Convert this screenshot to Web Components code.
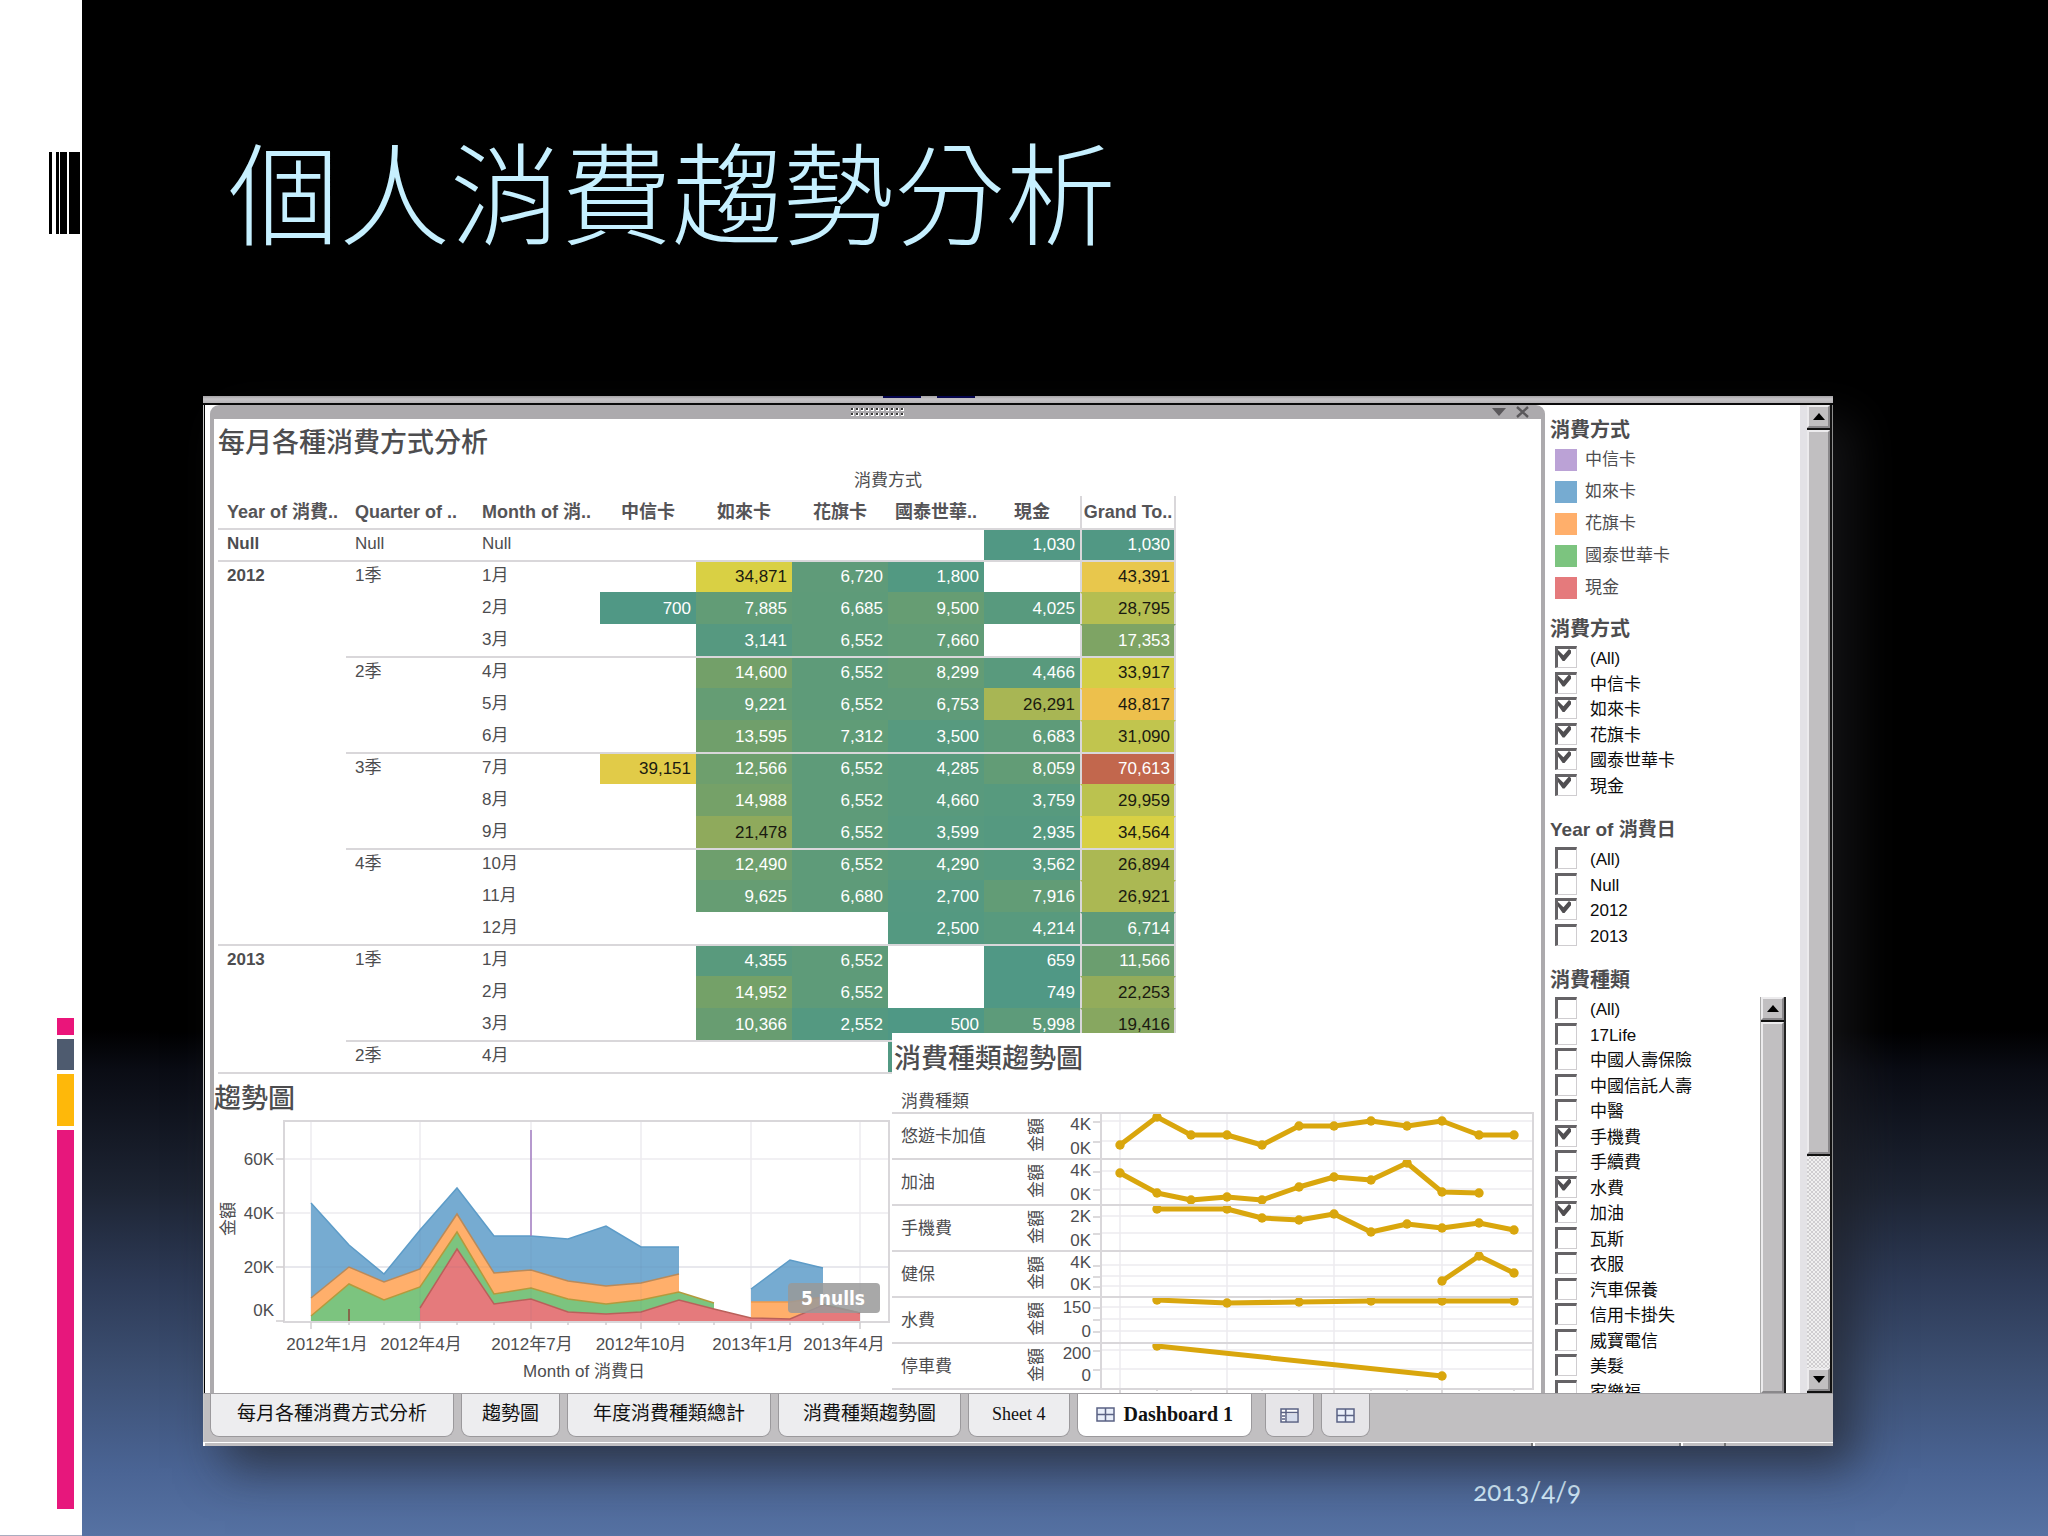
<!DOCTYPE html>
<html lang="zh-Hant">
<head>
<meta charset="utf-8">
<title>個人消費趨勢分析</title>
<style>
  html, body { margin: 0; }
  body { font: 17px/28px "Liberation Sans", "Noto Sans CJK TC", sans-serif; color: #4d4d4f; }
</style>
</head>
<body>
<slide-page>
  <accent-rail slot="rail"></accent-rail>
  <span slot="title">個人消費趨勢分析</span>
  <viz-window>
    <viz-sheet slot="sheet">
      <cross-tab heading="每月各種消費方式分析"></cross-tab>
      <area-trend heading="趨勢圖"></area-trend>
      <category-trends slot="overlay" heading="消費種類趨勢圖"></category-trends>
    </viz-sheet>
    <filter-pane slot="filters"></filter-pane>
    <sheet-tabs slot="tabs">
      <sheet-tab style="--pad:26px">每月各種消費方式分析</sheet-tab>
      <sheet-tab style="--pad:20px">趨勢圖</sheet-tab>
      <sheet-tab style="--pad:25px">年度消費種類總計</sheet-tab>
      <sheet-tab style="--pad:24px">消費種類趨勢圖</sheet-tab>
      <sheet-tab style="--pad:23px" serif>Sheet 4</sheet-tab>
      <sheet-tab style="--pad:18px" active icon="grid">Dashboard 1</sheet-tab>
      <sheet-tab style="--pad:14px" tool icon="sheet" label="新工作表"></sheet-tab>
      <sheet-tab style="--pad:14px" tool icon="grid" label="新儀表板"></sheet-tab>
    </sheet-tabs>
  </viz-window>
  <time slot="date" datetime="2013-04-09">2013/4/9</time>
</slide-page>

<script>
const shadow = (el, html) => { const r = el.attachShadow({ mode: 'open' }); r.innerHTML = html; return r; };
const SANS = '"Liberation Sans", "Noto Sans CJK TC", sans-serif';

customElements.define('slide-page', class extends HTMLElement {
  constructor() {
    super();
    shadow(this, `<style>
      :host { display: grid; grid-template-columns: 82px 1fr; min-height: 100vh; background: #fff; }
      main { display: flex; flex-direction: column; padding: 0 215px 0 121px;
        background: linear-gradient(#000 0, #000 1030px, #0a0c14 1070px, #1d2433 1190px, #2d3a56 1280px, #3c4f72 1370px, #4a6494 1470px, #5672a3 1536px); }
      h1 { margin: 114px 0 0 25px; height: 282px; font: 300 111px/150px "Noto Sans CJK TC", sans-serif; color: #c6f0ff; }
      footer { margin: 28px 0 0; padding-right: 252px; display: flex; justify-content: flex-end;
        font: 26px/34px Lato, "Open Sans", sans-serif; font-variant-numeric: oldstyle-nums; color: #d6eefe; }
    </style>
    <slot name="rail"></slot>
    <main><h1><slot name="title"></slot></h1><slot></slot><footer><slot name="date"></slot></footer></main>`);
  }
});

customElements.define('accent-rail', class extends HTMLElement {
  constructor() {
    super();
    shadow(this, `<style>
      :host { display: flex; flex-direction: column; background: #fff; border-bottom: 1px solid #a9acc0; box-sizing: border-box; }
      .code { display: flex; height: 82px; margin: 152px 0 784px 49px; }
      .code i { background: #000; }
      .bar { width: 17px; margin: 0 0 4px 57px; }
    </style>
    <div class="code"><i style="width:3px;margin-right:4px"></i><i style="width:3px;margin-right:1px"></i><i style="width:7px;margin-right:2px"></i><i style="width:11px"></i></div>
    <div class="bar" style="height:17px;background:#ea157a"></div>
    <div class="bar" style="height:31px;background:#4e5b6f"></div>
    <div class="bar" style="height:52px;background:#feb80a"></div>
    <div class="bar" style="height:379px;background:#e7177c"></div>`);
  }
});

customElements.define('viz-window', class extends HTMLElement {
  constructor() {
    super();
    shadow(this, `<style>
      :host { display: block; position: relative; background: #fff; box-shadow: 22px 22px 44px rgba(30,30,34,.62); }
      .edge { height: 7px; background: linear-gradient(#a5a3a6, #c6c4c7 3px, #b5b3b6); border-bottom: 2px solid #0a0a0a; padding-left: 680px; display: flex; gap: 16px; }
      .edge i { width: 38px; height: 2px; background: #06064e; }
      .body { display: flex; height: 988px; border-left: 1px solid #c9c9c9; border-right: 1px solid #8d8d8d; }
      .frame { flex: 1; display: flex; min-width: 0; border-left: 1px solid #000; border-right: 2px solid #111; padding-left: 5px; }
      .status { display: flex; height: 4px; background: #c1bfc1; border-top: 1px solid #fff; box-sizing: border-box; }
      .status i { height: 3px; border-right: 2px solid #777; border-left: 2px solid #fff; box-sizing: border-box; }
    </style>
    <div class="edge"><i></i><i></i></div>
    <div class="body"><div class="frame"><slot name="sheet"></slot><slot name="filters"></slot></div></div>
    <slot name="tabs"></slot>
    <div class="status"><i style="width:1330px"></i><i style="width:148px"></i><i style="width:45px"></i></div>`);
  }
});

customElements.define('viz-sheet', class extends HTMLElement {
  constructor() {
    super();
    let dots = '';
    for (let i = 0; i < 11; i++) for (let j = 0; j < 2; j++)
      dots += `<rect x="${i * 5}" y="${j * 5}" width="3" height="3" fill="#fff"/><rect x="${i * 5}" y="${j * 5}" width="2" height="2" fill="#3a3a3a"/>`;
    shadow(this, `<style>
      :host { flex: 1; min-width: 0; display: flex; flex-direction: column; }
      header { height: 14px; display: grid; grid-template-columns: 1fr auto 1fr; align-items: center; background: #acaaad; border-radius: 9px 9px 0 0; }
      header .tools { display: flex; justify-content: flex-end; gap: 10px; padding-right: 16px; }
      svg { display: block; }
      button { all: unset; display: block; }
      .content { flex: 1; position: relative; border: solid #acaaad; border-width: 0 4px; overflow: hidden; }
      ::slotted([slot=overlay]) { position: absolute; left: 678px; right: 0; top: 614px; bottom: 0; }
    </style>
    <header><span></span>
      <svg width="53" height="8">${dots}</svg>
      <div class="tools">
        <button aria-label="選單"><svg width="14" height="12"><path d="M0 2h14L7 10z" fill="#5a585b"/></svg></button>
        <button aria-label="關閉"><svg width="13" height="12"><path d="M1 1l11 10M12 1L1 11" stroke="#5a585b" stroke-width="2.4"/></svg></button>
      </div>
    </header>
    <div class="content"><slot></slot><slot name="overlay"></slot></div>`);
  }
});

/* Colour ramp of the highlight table: [amount, r, g, b] */
const RAMP = [[0,78,152,134],[6500,94,155,121],[14600,115,160,105],[21500,143,170,92],[26500,169,183,84],[31000,192,197,78],[34700,217,208,68],[39000,225,203,72],[43400,232,199,76],[48800,237,192,76],[70613,194,103,77]];
const ramp = v => {
  const k = Math.max(1, RAMP.findIndex(s => s[0] >= v));
  const a = RAMP[k - 1], b = RAMP[k], t = (v - a[0]) / (b[0] - a[0]);
  return `rgb(${[1, 2, 3].map(i => Math.round(a[i] + (b[i] - a[i]) * t)).join()})`;
};
const ROWS = [
  ['Null', 'Null', 'Null', [0,0,0,0,1030,1030]],
  ['2012', '1季', '1月', [0,34871,6720,1800,0,43391]],
  ['', '', '2月', [700,7885,6685,9500,4025,28795]],
  ['', '', '3月', [0,3141,6552,7660,0,17353]],
  ['', '2季', '4月', [0,14600,6552,8299,4466,33917]],
  ['', '', '5月', [0,9221,6552,6753,26291,48817]],
  ['', '', '6月', [0,13595,7312,3500,6683,31090]],
  ['', '3季', '7月', [39151,12566,6552,4285,8059,70613]],
  ['', '', '8月', [0,14988,6552,4660,3759,29959]],
  ['', '', '9月', [0,21478,6552,3599,2935,34564]],
  ['', '4季', '10月', [0,12490,6552,4290,3562,26894]],
  ['', '', '11月', [0,9625,6680,2700,7916,26921]],
  ['', '', '12月', [0,0,0,2500,4214,6714]],
  ['2013', '1季', '1月', [0,4355,6552,0,659,11566]],
  ['', '', '2月', [0,14952,6552,0,749,22253]],
  ['', '', '3月', [0,10366,2552,500,5998,19416]],
  ['', '2季', '4月', [0,0,0,'',0,0]]
];
customElements.define('cross-tab', class extends HTMLElement {
  constructor() {
    super();
    const span = (i, c) => { let n = 1; while (ROWS[i + n] && ROWS[i + n][c] === '' && !(c === 1 && ROWS[i + n][0])) n++; return n; };
    const body = ROWS.map((r, i) => {
      const y = r[0] ? `<th class="y" rowspan="${span(i, 0)}">${r[0]}</th>` : '';
      const q = r[1] ? `<th rowspan="${span(i, 1)}">${r[1]}</th>` : '';
      const cells = r[3].map((v, k) => v === '' ? `<td style="background-color:${ramp(1500)}"></td>` :
        v ? `<td style="background-color:${ramp(v)};color:${v > 18000 && v < 60000 ? '#1a1a10' : '#fff'}">${v.toLocaleString('en-US')}</td>` : '<td></td>').join('');
      return `<tr${r[1] ? ' class="g"' : ''}>${y}${q}<th>${r[2]}</th>${cells}</tr>`;
    }).join('');
    shadow(this, `<style>
      :host { display: block; padding-left: 4px; }
      h2 { margin: 0; height: 46px; font: 500 27px/48px ${SANS}; }
      table { border-collapse: separate; border-spacing: 0; table-layout: fixed; width: 958px; border-bottom: 2px solid #d9d7da; margin-bottom: -2px; }
      th, td { box-sizing: border-box; height: 32px; padding: 0; line-height: 28px; white-space: nowrap; }
      tbody th, tbody td { border-top: 2px solid transparent; }
      tbody th { text-align: left; font-weight: 400; vertical-align: top; padding-left: 9px; }
      tbody th.y { font-weight: 700; }
      td { text-align: right; padding-right: 5px; }
      tbody .g > * { border-top-color: #d9d7da; }
      .over th { height: 31px; font-weight: 400; text-align: center; }
      .heads th { font-size: 18px; text-align: center; overflow: hidden; color: #555457; }
      .heads th.l { text-align: left; padding-left: 9px; }
      td:last-child, .heads th:last-child { border-left: 2px solid #d9d7da; border-right: 2px solid #d9d7da; padding-right: 4px; }
      .heads th:last-child { padding: 0; }
    </style>
    <h2>${this.getAttribute('heading') || ''}</h2>
    <table>
      <colgroup><col style="width:128px"><col style="width:127px"><col style="width:127px"><col span="6" style="width:96px"></colgroup>
      <thead>
        <tr class="over"><th colspan="3"></th><th colspan="6">消費方式</th></tr>
        <tr class="heads"><th class="l">Year of 消費..</th><th class="l">Quarter of ..</th><th class="l">Month of 消..</th><th>中信卡</th><th>如來卡</th><th>花旗卡</th><th>國泰世華..</th><th>現金</th><th>Grand To..</th></tr>
      </thead>
      <tbody>${body}</tbody>
    </table>`);
  }
});

customElements.define('area-trend', class extends HTMLElement {
  constructor() {
    super();
    const X = [311,349,384,420,457,494,531,568,606,641,679,714,751,790,823,860];
    const B = 1321;
    const pts = (ys, s) => ys.map((y, i) => `${X[s + i]},${y}`);
    const area = (top, base, s, fill, edge) =>
      `<polygon points="${pts(top, s).concat(pts(base, s).reverse()).join(' ')}" fill="${fill}"/><polyline points="${pts(top, s).join(' ')}" fill="none" stroke="${edge}" stroke-width="1.5"/>`;
    const flat = n => Array(n).fill(B);
    const blue = [1203,1245,1274,1230,1188,1236,1236,1239,1226,1247,1247];
    const orange = [1298,1267,1282,1269,1214,1273,1270,1281,1286,1283,1274];
    const green = [1316,1284,1300,1287,1232,1294,1288,1299,1304,1300,1292,1303];
    const red = [1308,1249,1304,1299,1312,1314,1312,1300,1309,1318,1319,1305,1313];
    const yt = [['60K',1159,1159],['40K',1213,1213],['20K',1267,1267],['0K',1321,1310]];
    const xt = [['2012年1月',311,327],['2012年4月',420,421],['2012年7月',531,532],['2012年10月',641,641],['2013年1月',751,753],['2013年4月',860,844]];
    shadow(this, `<style>
      :host { display: block; width: 678px; }
      h2 { margin: 0; height: 48px; box-sizing: border-box; padding-top: 6px; font: 500 27px/42px ${SANS}; }
      svg { display: block; width: 100%; }
      text { font: 17px ${SANS}; fill: #4d4d4f; }
      .tip { font: 700 19px "DejaVu Sans Condensed", "DejaVu Sans", sans-serif; fill: #fff; }
    </style>
    <h2>${this.getAttribute('heading') || ''}</h2>
    <svg viewBox="214 1120 678 273">
      <rect x="284" y="1121" width="605" height="201" fill="none" stroke="#d9d7da" stroke-width="2"/>
      <g stroke="#ecebef" stroke-width="1.5">${yt.slice(0, 3).map(t => `<path d="M285 ${t[1]}H888"/>`).join('')}${xt.map(t => `<path d="M${t[1]} 1122V1321"/>`).join('')}</g>
      <g stroke="#d0ced1" stroke-width="1.5">${yt.map(t => `<path d="M276 ${t[1]}H284"/>`).join('')}${X.map((x, i) => `<path d="M${x} 1322v${i % 3 ? 3 : 7}"/>`).join('')}</g>
      ${area(blue, orange, 0, '#76abd1', '#5d9cc8')}
      ${area([1289,1260,1268], [1302,1302,1297], 12, '#76abd1', '#5d9cc8')}
      ${area(orange, green.slice(0, 11), 0, '#ffaf6b', '#b98a5a')}
      ${area([1302,1302,1297], [1318,1319,1304], 12, '#ffaf6b', '#f29a4a')}
      ${area(green, flat(4).concat(red.slice(1, 9)), 0, '#7cc47f', '#b39a3c')}
      ${area([1304,1313], [1305,1315], 14, '#7cc47f', '#5fae63')}
      ${area(red, flat(13), 3, '#e57a7c', '#b9605a')}
      <path d="M349 1309V1321" stroke="#8a4a3a" stroke-width="1.5"/>
      <path d="M531 1130V1236" stroke="#a27cc2" stroke-width="1.5"/>
      <path d="M285 1267H888M420 1200V1320M531 1238V1320M641 1240V1320" stroke="#4a6a8a" stroke-opacity=".1"/>
      <rect x="788" y="1283" width="92" height="30" rx="4" fill="#999" fill-opacity=".85"/>
      <text class="tip" x="833" y="1305" text-anchor="middle">5 nulls</text>
      ${yt.map(t => `<text x="274" y="${t[2] + 6}" text-anchor="end">${t[0]}</text>`).join('')}
      ${xt.map(t => `<text x="${t[2]}" y="1350" text-anchor="middle">${t[0]}</text>`).join('')}
      <text x="584" y="1377" text-anchor="middle">Month of 消費日</text>
      <text transform="translate(234 1219) rotate(-90)" text-anchor="middle">金額</text>
    </svg>`);
  }
});

const CX = [20,57,91,127,162,199,234,271,307,342,379,414];
const TRENDS = [
  ['悠遊卡加值', ['4K',11,'0K',35], [8,28], [[0,32],[1,4],[2,22],[3,22],[4,32],[5,13],[6,13],[7,8],[8,13],[9,8],[10,22],[11,22]]],
  ['加油', ['4K',11,'0K',35], [12,30], [[0,14],[1,34],[2,41],[3,38],[4,41],[5,28],[6,18],[7,21],[8,4],[9,33],[10,34]]],
  ['手機費', ['2K',11,'0K',35], [11,28], [[1,4],[3,4],[4,13],[5,15],[6,9],[7,27],[8,19],[9,23],[10,18],[11,25]]],
  ['健保', ['4K',11,'0K',33], [14,25,35], [[9,30],[10,5],[11,22]]],
  ['水費', ['150',10,'0',34], [10,22,34], [[1,3],[3,6],[5,5],[7,4],[9,4],[11,4]]],
  ['停車費', ['200',10,'0',32], [7,26], [[1,3],[9,33]]]
];
customElements.define('category-trend-row', class extends HTMLElement {
  set data([name, ax, ticks, pts]) {
    const P = pts.map(([i, y]) => [CX[i], y]);
    shadow(this, `<style>
      :host { display: grid; grid-template-columns: 131px 27px 50px 1fr; height: 46px; box-sizing: border-box; border-top: 2px solid #d9d7da; }
      b { font-weight: 400; padding-left: 9px; line-height: 46px; white-space: nowrap; }
      svg { display: block; width: 100%; height: 44px; overflow: hidden; }
      text { font: 17px ${SANS}; fill: #4d4d4f; }
    </style>
    <b>${name}</b>
    <svg viewBox="0 0 27 44"><text transform="translate(19 21) rotate(-90)" text-anchor="middle">金額</text></svg>
    <svg viewBox="0 0 50 44"><text x="41" y="${ax[1] + 5}" text-anchor="end">${ax[0]}</text><text x="41" y="${ax[3] + 5}" text-anchor="end">${ax[2]}</text>
      ${ticks.map(y => `<path d="M43 ${y}H50" stroke="#d0ced1" stroke-width="1.5"/>`).join('')}</svg>
    <svg viewBox="0 0 434 44">
      <g stroke="#ecebef" stroke-width="1.5">${ticks.map(y => `<path d="M0 ${y - 1}H434"/>`).join('')}${[0, 3, 6, 9].map(i => `<path d="M${CX[i]} 0V44"/>`).join('')}</g>
      <path d="M1 0V44M433 0V44" stroke="#d9d7da" stroke-width="2"/>
      <polyline points="${P.map(p => `${p[0]},${p[1] - 1}`).join(' ')}" fill="none" stroke="#d9a60d" stroke-width="5" stroke-linejoin="round"/>
      <g fill="#d9a60d">${P.map(p => `<circle cx="${p[0]}" cy="${p[1] - 1}" r="4.7"/>`).join('')}</g>
    </svg>`);
  }
});
customElements.define('category-trends', class extends HTMLElement {
  constructor() {
    super();
    const r = shadow(this, `<style>
      :host { display: block; background: #fff; }
      h2 { margin: 0; height: 54px; padding-left: 2px; font: 500 27px/52px ${SANS}; }
      p { margin: 0; height: 25px; line-height: 29px; padding-left: 9px; }
      .rows { margin-right: 7px; border-bottom: 2px solid #d9d7da; }
      .feet { display: block; width: 434px; margin-left: 208px; }
    </style>
    <h2>${this.getAttribute('heading') || ''}</h2><p>消費種類</p><div class="rows"></div>
    <svg class="feet" viewBox="0 0 434 4" height="4">${CX.map((x, i) => `<path d="M${x} 0v${i % 3 ? 1 : 4}" stroke="#d0ced1" stroke-width="1.5"/>`).join('')}</svg>`);
    TRENDS.forEach(t => { const e = document.createElement('category-trend-row'); e.data = t; r.querySelector('.rows').append(e); });
  }
});

customElements.define('scroll-rail', class extends HTMLElement {
  constructor() {
    super();
    const full = this.hasAttribute('full');
    shadow(this, `<style>
      :host { display: flex; flex-direction: column; width: 23px; overflow: hidden;
        background: repeating-conic-gradient(#cfcdd0 0 25%, #f0f0f0 0 50%) 0 0 / 4px 4px; }
      button, .thumb { box-sizing: border-box; border: 2px solid; border-color: #ecebed #8a888b #8a888b #ecebed; background: #c1bfc1; box-shadow: 0 2px #111; }
      button { flex: none; display: grid; place-items: center; width: 100%; height: 23px; padding: 0; border-radius: 0; margin-bottom: 2px; position: relative; }
      .thumb { height: var(--thumb, 100%); }
      .gap { flex: 1; }
    </style>
    <button aria-label="向上捲動"><svg width="12" height="7"><path d="M0 7L6 0l6 7z"/></svg></button>
    <div class="thumb"></div>
    ${full ? '<div class="gap"></div><button aria-label="向下捲動"><svg width="12" height="7"><path d="M0 0h12L6 7z"/></svg></button>' : ''}`);
  }
});

customElements.define('filter-list', class extends HTMLElement {
  constructor() {
    super();
    const items = this.getAttribute('items').split(',');
    shadow(this, `<style>
      :host { display: block; }
      fieldset { display: flex; flex-direction: column; height: 100%; border: 0; margin: 0; padding: 0; min-width: 0; }
      label { flex: 1; min-height: 0; display: flex; gap: 13px; align-items: flex-start; color: #0c0c0c; line-height: 26px; white-space: nowrap; }
      input { appearance: none; box-sizing: border-box; flex: none; width: 22px; height: 22px; margin: 0; background: #fff; border: solid; border-width: 3px 1px 1px 3px; border-color: #656366 #cfcdd0 #cfcdd0 #656366; }
      input:checked::before { content: ""; display: block; width: 13px; height: 12px; background: #504e51; clip-path: polygon(0 8%, 42% 52%, 84% 0, 100% 12%, 100% 36%, 50% 100%, 36% 100%, 0 45%); }
    </style>
    <fieldset aria-label="${this.getAttribute('label')}">${items.map(s => {
      const on = s[0] === '+';
      return `<label><input type="checkbox"${on ? ' checked' : ''}>${on ? s.slice(1) : s}</label>`;
    }).join('')}</fieldset>`);
  }
});

customElements.define('filter-pane', class extends HTMLElement {
  constructor() {
    super();
    const legend = [['#bba2d6','中信卡'],['#76abd1','如來卡'],['#ffaf6b','花旗卡'],['#7cc47f','國泰世華卡'],['#e57a7c','現金']];
    shadow(this, `<style>
      :host { display: flex; flex: none; }
      .cards { width: 255px; height: 988px; overflow: hidden; padding-left: 5px; box-sizing: border-box; }
      h3 { margin: 0; height: 32px; font: 700 20px/30px ${SANS}; }
      h3.mixed { font-size: 19px; }
      ul { list-style: none; margin: 5px 0 10px 5px; padding: 0; }
      li { display: flex; align-items: center; gap: 8px; height: 32px; line-height: 26px; }
      li i { width: 22px; height: 22px; }
      filter-list { margin-left: 5px; }
      .scroll { display: flex; justify-content: space-between; height: 396px; overflow: hidden; }
      .inner { border-left: 1px solid #aaa; border-right: 2px solid #222; margin-right: 14px; }
      .gutter { width: 7px; background: #e3e2e6; }
    </style>
    <div class="cards">
      <h3 style="padding-top:10px;height:24px">消費方式</h3>
      <ul>${legend.map(l => `<li><i style="background:${l[0]}"></i>${l[1]}</li>`).join('')}</ul>
      <h3>消費方式</h3>
      <filter-list style="height:153px" label="消費方式" items="+(All),+中信卡,+如來卡,+花旗卡,+國泰世華卡,+現金"></filter-list>
      <h3 class="mixed" style="padding-top:16px">Year of 消費日</h3>
      <filter-list style="height:102px" label="Year of 消費日" items="(All),Null,+2012,2013"></filter-list>
      <h3 style="padding-top:16px">消費種類</h3>
      <div class="scroll">
        <filter-list style="height:408px" label="消費種類" items="(All),17Life,中國人壽保險,中國信託人壽,中醫,+手機費,手續費,+水費,+加油,瓦斯,衣服,汽車保養,信用卡掛失,威寶電信,美髮,家樂福"></filter-list>
        <scroll-rail class="inner"></scroll-rail>
      </div>
    </div>
    <div class="gutter"></div>
    <scroll-rail full style="--thumb:724px"></scroll-rail>`);
  }
});

const ICONS = {
  grid: '<rect x="1" y="1" width="17" height="13" fill="#e9effa" stroke="#5a6284" stroke-width="1.5"/><path d="M9.5 1v13M1 7.5h17" stroke="#5a6284" stroke-width="1.5"/>',
  sheet: '<rect x="1" y="1" width="17" height="13" fill="#fff" stroke="#5a6284" stroke-width="1.5"/><path d="M1 4.5h17M6 1v13M2 8h3M2 11h3" stroke="#5a6284" stroke-width="1.5"/><rect x="7" y="6" width="10" height="7" fill="#d5dcec"/>'
};
customElements.define('sheet-tabs', class extends HTMLElement {
  constructor() {
    super();
    shadow(this, `<style>
      :host { display: block; background: #c1bfc1; border-left: 1px solid #c9c9c9; border-top: 1px solid #a3a1a4; height: 49px; box-sizing: border-box; }
      nav { display: flex; gap: 7px; padding-left: 6px; }
    </style><nav role="tablist"><slot></slot></nav>`);
  }
});
customElements.define('sheet-tab', class extends HTMLElement {
  constructor() {
    super();
    const icon = this.getAttribute('icon'), label = this.getAttribute('label');
    shadow(this, `<style>
      :host { display: block; }
      button { box-sizing: border-box; height: 43px; padding: 0 var(--pad) 2px; display: flex; align-items: center; gap: 9px; white-space: nowrap;
        background: #ededef; border: 1px solid #9b999c; border-top: 0; border-radius: 0 0 9px 9px; color: #111; font: 19px/26px ${SANS}; }
      :host([serif]) button { font: 18px/26px "Liberation Serif", serif; }
      :host([active]) button { background: #fff; font: 700 20px/26px "Liberation Serif", serif; }
      :host([tool]) button { padding-bottom: 0; background: #e6e5e8; }
      :host([tool][icon=sheet]) { margin-left: 6px; }
      svg { display: block; }
    </style>
    <button role="tab"${label ? ` aria-label="${label}"` : ''}>${icon ? `<svg width="19" height="15">${ICONS[icon]}</svg>` : ''}<slot></slot></button>`);
  }
});
</script>
</body>
</html>
